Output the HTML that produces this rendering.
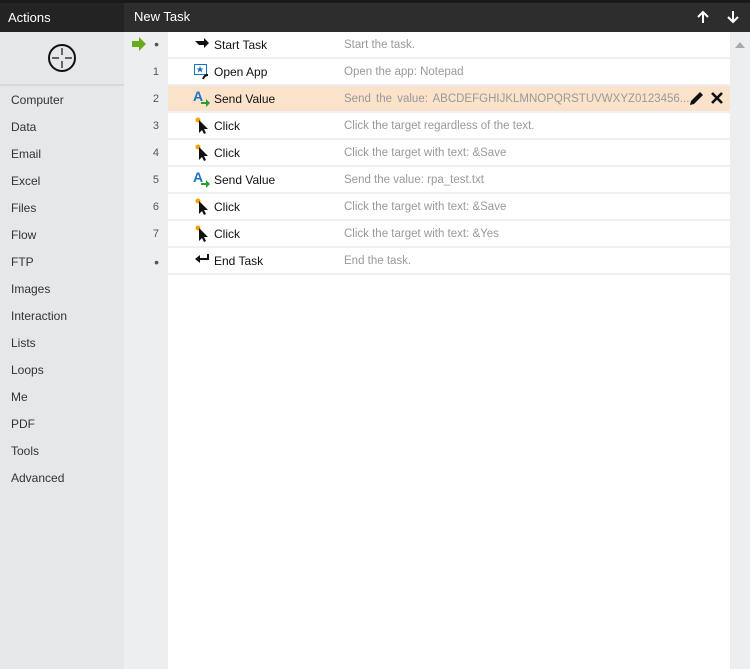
<!DOCTYPE html><html><head><style>
*{margin:0;padding:0;box-sizing:border-box}
body{width:750px;height:669px;position:relative;overflow:hidden;font-family:"Liberation Sans",sans-serif;font-size:12px;background:#fff}
.top{position:absolute;left:0;top:0;width:750px;height:32px;background:#2d2d2d;border-top:3px solid #1a1a1a}
.ah{position:absolute;left:0;top:0;width:124px;height:32px;background:#232323;border-top:3px solid #1a1a1a;color:#fff;font-size:13px;padding:7px 0 0 8px}
.nt{position:absolute;left:134px;top:9px;color:#fff;font-size:13px}
.side{position:absolute;left:0;top:32px;width:124px;height:637px;background:#e5e7e9}
.side .div{position:absolute;left:0;top:52px;width:124px;height:2px;background:#d6d8da}
.side .it{position:absolute;left:11px;color:#333;font-size:12px}
.num{position:absolute;left:124px;top:32px;width:44px;height:637px;background:#eceef0}
.sb{position:absolute;left:730px;top:32px;width:20px;height:637px;background:#eceef0}
.row{position:absolute;left:168px;width:562px;height:27px;border-bottom:2px solid #eef0f2;background:#fff}
.row.sel{background:#fbe3cb}
.n{position:absolute;left:124px;width:44px;text-align:right;padding-right:9px;color:#555;font-size:11px}
.t{position:absolute;left:214px;color:#111}
.d{position:absolute;left:344px;color:#999;font-size:11.5px;padding-top:1px}
.ic{position:absolute;left:194px}
</style></head><body>
<div class="top"></div>
<div class="ah">Actions</div>
<div class="nt">New Task</div>
<svg style="position:absolute;left:696px;top:10px" width="14" height="14" viewBox="0 0 14 14"><path d="M7 13V2M2 7l5-5 5 5" stroke="#fff" stroke-width="2" fill="none"/></svg>
<svg style="position:absolute;left:726px;top:10px" width="14" height="14" viewBox="0 0 14 14"><path d="M7 1v11M2 7l5 5 5-5" stroke="#fff" stroke-width="2" fill="none"/></svg>
<div class="side"><div class="div"></div>
<svg style="position:absolute;left:47px;top:11px" width="30" height="30" viewBox="0 0 30 30"><circle cx="15" cy="15" r="13" stroke="#111" stroke-width="2" fill="none"/><path d="M15 5v7M15 18v7M5 15h7M18 15h7" stroke="#111" stroke-width="1.2"/></svg>
<div class="it" style="top:61px">Computer</div><div class="it" style="top:88px">Data</div><div class="it" style="top:115px">Email</div><div class="it" style="top:142px">Excel</div><div class="it" style="top:169px">Files</div><div class="it" style="top:196px">Flow</div><div class="it" style="top:223px">FTP</div><div class="it" style="top:250px">Images</div><div class="it" style="top:277px">Interaction</div><div class="it" style="top:304px">Lists</div><div class="it" style="top:331px">Loops</div><div class="it" style="top:358px">Me</div><div class="it" style="top:385px">PDF</div><div class="it" style="top:412px">Tools</div><div class="it" style="top:439px">Advanced</div>
</div>
<div class="num"></div>
<div class="sb"><svg style="position:absolute;left:5px;top:10px" width="10" height="6"><path d="M0 6L5 0 10 6z" fill="#aaa"/></svg></div>
<svg style="position:absolute;left:132px;top:37px" width="14" height="14" viewBox="0 0 14 14"><path d="M0 4h7V0l7 7-7 7v-4H0z" fill="#6aab1a"/></svg>

<div class="row" style="top:32px"></div><div class="row" style="top:59px"></div><div class="row sel" style="top:86px"></div><div class="row" style="top:113px"></div><div class="row" style="top:140px"></div><div class="row" style="top:167px"></div><div class="row" style="top:194px"></div><div class="row" style="top:221px"></div><div class="row" style="top:248px"></div>

<div class="n" style="font-size:14px;top:36px">•</div>
<div class="n" style="top:66px">1</div><div class="n" style="top:93px">2</div><div class="n" style="top:120px">3</div><div class="n" style="top:147px">4</div><div class="n" style="top:174px">5</div><div class="n" style="top:201px">6</div><div class="n" style="top:228px">7</div>
<div class="n" style="top:254px;font-size:14px">•</div>

<svg class="ic" style="top:38px" width="16" height="12" viewBox="0 0 16 12"><path d="M1 3h9V0l5 5-5 5V7H5z" fill="#111"/></svg>
<svg class="ic" style="top:64px" width="16" height="16" viewBox="0 0 16 16"><rect x="0.5" y="0.5" width="12" height="10" stroke="#1a73c9" fill="#fff"/><path d="M6 2l1 2.5h2.5l-2 1.5.8 2.5L6 7l-2.3 1.5.8-2.5-2-1.5H5z" fill="#1a73c9"/><path d="M9 15c1-3 3-4 5-4" stroke="#111" stroke-width="2" fill="none"/></svg>
<svg class="ic" style="top:89px;left:193px" width="18" height="18"><text x="0" y="12" font-family="Liberation Sans" font-weight="bold" font-size="14" fill="#1a73c9">A</text><path d="M8 13h5v-3l4 4-4 4v-3H8z" fill="#2a9d2a"/></svg>
<svg class="ic" style="top:170px;left:193px" width="18" height="18"><text x="0" y="12" font-family="Liberation Sans" font-weight="bold" font-size="14" fill="#1a73c9">A</text><path d="M8 13h5v-3l4 4-4 4v-3H8z" fill="#2a9d2a"/></svg>
<svg class="ic" style="top:117px" width="16" height="18" viewBox="0 0 16 18"><circle cx="4" cy="3" r="2.5" fill="#f5a300"/><path d="M5 3v13l3-3 2 4 2-1-2-4h4z" fill="#111"/></svg>
<svg class="ic" style="top:144px" width="16" height="18" viewBox="0 0 16 18"><circle cx="4" cy="3" r="2.5" fill="#f5a300"/><path d="M5 3v13l3-3 2 4 2-1-2-4h4z" fill="#111"/></svg>
<svg class="ic" style="top:198px" width="16" height="18" viewBox="0 0 16 18"><circle cx="4" cy="3" r="2.5" fill="#f5a300"/><path d="M5 3v13l3-3 2 4 2-1-2-4h4z" fill="#111"/></svg>
<svg class="ic" style="top:225px" width="16" height="18" viewBox="0 0 16 18"><circle cx="4" cy="3" r="2.5" fill="#f5a300"/><path d="M5 3v13l3-3 2 4 2-1-2-4h4z" fill="#111"/></svg>
<svg class="ic" style="top:254px" width="16" height="12" viewBox="0 0 16 12"><path d="M15 0v6H6v3L1 5l5-4v3h7V0z" fill="#111"/></svg>

<div class="t" style="top:38px">Start Task</div><div class="d" style="top:38px">Start the task.</div>
<div class="t" style="top:65px">Open App</div><div class="d" style="top:65px">Open the app: Notepad</div>
<div class="t" style="top:92px">Send Value</div><div class="d" style="top:92px;word-spacing:2px">Send the value: ABCDEFGHIJKLMNOPQRSTUVWXYZ0123456...</div>
<div class="t" style="top:119px">Click</div><div class="d" style="top:119px">Click the target regardless of the text.</div>
<div class="t" style="top:146px">Click</div><div class="d" style="top:146px">Click the target with text: &amp;Save</div>
<div class="t" style="top:173px">Send Value</div><div class="d" style="top:173px">Send the value: rpa_test.txt</div>
<div class="t" style="top:200px">Click</div><div class="d" style="top:200px">Click the target with text: &amp;Save</div>
<div class="t" style="top:227px">Click</div><div class="d" style="top:227px">Click the target with text: &amp;Yes</div>
<div class="t" style="top:254px">End Task</div><div class="d" style="top:254px">End the task.</div>

<svg style="position:absolute;left:689px;top:90px" width="16" height="16" viewBox="0 0 16 16"><path d="M1 15l1-4 9-9 3 3-9 9z" fill="#111"/></svg>
<svg style="position:absolute;left:711px;top:92px" width="12" height="12" viewBox="0 0 12 12"><path d="M1 1l10 10M11 1L1 11" stroke="#111" stroke-width="2.6"/></svg>
</body></html>
